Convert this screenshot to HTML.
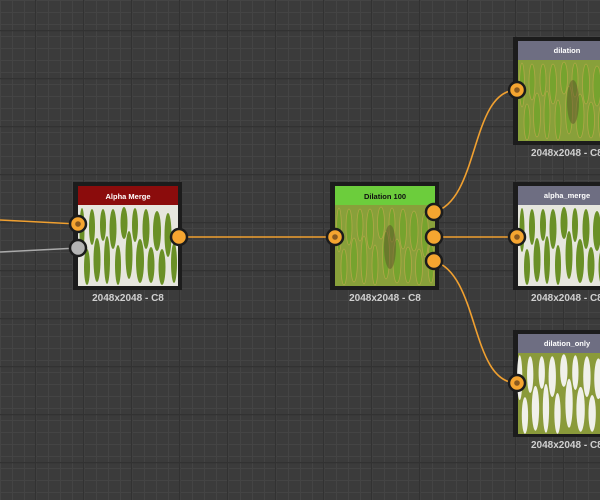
<!DOCTYPE html>
<html><head><meta charset="utf-8"><style>
html,body{margin:0;padding:0;background:#3a3a3a;width:600px;height:500px;overflow:hidden}
text{font-family:"Liberation Sans",sans-serif}
</style></head><body>
<svg width="600" height="500" viewBox="0 0 600 500" xmlns="http://www.w3.org/2000/svg">
<defs>
<pattern id="minor" width="12" height="12" patternUnits="userSpaceOnUse">
<rect width="12" height="12" fill="#3b3b3b"/>
<path d="M0 .5H12M.5 0V12" stroke="#444" stroke-width="1"/>
</pattern>
<pattern id="major" width="48" height="48" patternUnits="userSpaceOnUse" x="-13" y="-18">
<path d="M0 .5H48M.5 0V48" stroke="#323232" stroke-width="1.5"/>
</pattern>
<g id="L">
<ellipse cx="4" cy="25" rx="2.5" ry="22"/>
<ellipse cx="9" cy="62" rx="3" ry="18"/>
<ellipse cx="14" cy="22" rx="3" ry="18"/>
<ellipse cx="19" cy="55" rx="3.5" ry="22"/>
<ellipse cx="25" cy="20" rx="3" ry="16"/>
<ellipse cx="29" cy="55" rx="3" ry="24"/>
<ellipse cx="35" cy="24" rx="3.5" ry="20"/>
<ellipse cx="40" cy="60" rx="3" ry="20"/>
<ellipse cx="46" cy="18" rx="3.5" ry="16"/>
<ellipse cx="51" cy="50" rx="3.5" ry="24"/>
<ellipse cx="57" cy="20" rx="3" ry="17"/>
<ellipse cx="62" cy="56" rx="4" ry="22"/>
<ellipse cx="68" cy="24" rx="3.5" ry="20"/>
<ellipse cx="73" cy="60" rx="3.5" ry="18"/>
<ellipse cx="79" cy="26" rx="4" ry="20"/>
<ellipse cx="84" cy="62" rx="3.5" ry="18"/>
<ellipse cx="90" cy="30" rx="3.5" ry="22"/>
<ellipse cx="96" cy="58" rx="3" ry="20"/>
</g>
<g id="imgA"><rect width="100" height="81" fill="#e6e6de"/><g fill="#6a9026"><use href="#L"/></g></g>
<g id="imgD"><rect width="100" height="81" fill="#88a03a"/><g fill="#76a32e" stroke="#b0a848" stroke-width=".8"><use href="#L"/></g><ellipse cx="55" cy="42" rx="6" ry="22" fill="#5a4a2a" opacity=".45"/></g>
<g id="imgO"><rect width="100" height="81" fill="#8a9a3a"/><g fill="#f0f0ea" transform="translate(50,40) scale(1.05,1.02) translate(-50,-40)"><use href="#L"/></g></g>
</defs>
<rect width="600" height="500" fill="url(#minor)"/>
<rect width="600" height="500" fill="url(#major)"/>

<g fill="none" stroke-width="1.6">
<path d="M0 220 L78 224" stroke="#f0a030"/>
<path d="M0 252 L78 248" stroke="#aaa"/>
<path d="M179 237 H335" stroke="#f0a030"/>
<path d="M434 237 H517" stroke="#f0a030"/>
<path d="M434 212 C480 200,470 90,517 90" stroke="#f0a030"/>
<path d="M434 261 C480 275,470 383,517 383" stroke="#f0a030"/>
</g>

<rect x="73" y="182" width="109" height="108" fill="#1c1c1c"/>
<rect x="78" y="186" width="100" height="19" fill="#8b0c0c"/>
<text x="128" y="199" font-size="7.5" font-weight="bold" fill="#fff" text-anchor="middle">Alpha Merge</text>
<g transform="translate(78,205)"><use href="#imgA"/></g>
<text x="128" y="301" font-size="10" font-weight="bold" fill="#d0d0d0" text-anchor="middle">2048x2048 - C8</text>

<rect x="330" y="182" width="109" height="108" fill="#1c1c1c"/>
<rect x="335" y="186" width="100" height="19" fill="#6ccd3c"/>
<text x="385" y="199" font-size="7.5" font-weight="bold" fill="#111" text-anchor="middle">Dilation 100</text>
<g transform="translate(335,205)"><use href="#imgD"/></g>
<text x="385" y="301" font-size="10" font-weight="bold" fill="#d0d0d0" text-anchor="middle">2048x2048 - C8</text>

<rect x="513" y="37" width="100" height="108" fill="#1c1c1c"/>
<rect x="518" y="41" width="100" height="19" fill="#6e6e82"/>
<text x="567" y="53" font-size="7.5" font-weight="bold" fill="#fff" text-anchor="middle">dilation</text>
<g transform="translate(518,60)"><use href="#imgD"/></g>
<text x="531" y="156" font-size="10" font-weight="bold" fill="#d0d0d0">2048x2048 - C8</text>

<rect x="513" y="182" width="100" height="108" fill="#1c1c1c"/>
<rect x="518" y="186" width="100" height="19" fill="#6e6e82"/>
<text x="567" y="198" font-size="7.5" font-weight="bold" fill="#fff" text-anchor="middle">alpha_merge</text>
<g transform="translate(518,205)"><use href="#imgA"/></g>
<text x="531" y="301" font-size="10" font-weight="bold" fill="#d0d0d0">2048x2048 - C8</text>

<rect x="513" y="330" width="100" height="107" fill="#1c1c1c"/>
<rect x="518" y="334" width="100" height="19" fill="#6e6e82"/>
<text x="567" y="346" font-size="7.5" font-weight="bold" fill="#fff" text-anchor="middle">dilation_only</text>
<g transform="translate(518,353)"><use href="#imgO"/></g>
<text x="531" y="448" font-size="10" font-weight="bold" fill="#d0d0d0">2048x2048 - C8</text>

<g stroke="#1c1c1c" stroke-width="2.5">
<circle cx="78" cy="224" r="8" fill="#f5a530"/>
<circle cx="78" cy="248" r="8" fill="#b4b4b4"/>
<circle cx="179" cy="237" r="8" fill="#f5a530"/>
<circle cx="335" cy="237" r="8" fill="#f5a530"/>
<circle cx="434" cy="212" r="8" fill="#f5a530"/>
<circle cx="434" cy="237" r="8" fill="#f5a530"/>
<circle cx="434" cy="261" r="8" fill="#f5a530"/>
<circle cx="517" cy="90" r="8" fill="#f5a530"/>
<circle cx="517" cy="237" r="8" fill="#f5a530"/>
<circle cx="517" cy="383" r="8" fill="#f5a530"/>
</g>
<g fill="#8a5a20">
<circle cx="78" cy="224" r="2.8"/>
<circle cx="335" cy="237" r="2.8"/>
<circle cx="517" cy="90" r="2.8"/>
<circle cx="517" cy="237" r="2.8"/>
<circle cx="517" cy="383" r="2.8"/>
</g>
</svg>
</body></html>
